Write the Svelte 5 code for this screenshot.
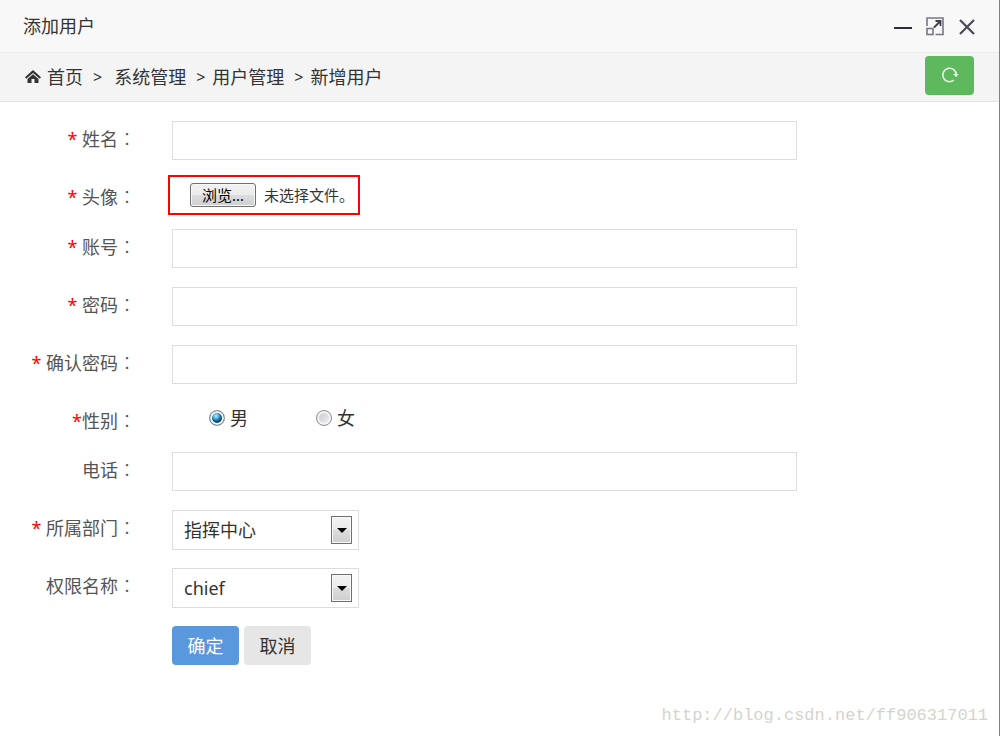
<script>
  const crumbs = ['系统管理', '用户管理', '新增用户'];
  const departments = ['指挥中心'];
  const roles = ['chief'];

  let name = '';
  let account = '';
  let password = '';
  let confirmPassword = '';
  let sex = 'male';
  let phone = '';
  let department = departments[0];
  let role = roles[0];
  let files;

  $: fileName = files && files.length ? files[0].name : '未选择文件。';

  function handleSubmit() {
    if (password !== confirmPassword) {
      alert('两次输入的密码不一致');
    }
  }
</script>

<div class="dialog">
  <header class="title-bar">
    <h1>添加用户</h1>
    <div class="window-tools">
      <button type="button" aria-label="最小化">
        <svg width="20" height="20" viewBox="0 0 20 20"><path d="M1 12h18" stroke="#2e2d3c" stroke-width="2" /></svg>
      </button>
      <button type="button" aria-label="最大化">
        <svg width="20" height="20" viewBox="0 0 20 20" fill="none" stroke="#777782" stroke-width="1.6">
          <path d="M2 10V2h16v16.500H10.500" />
          <rect x="2" y="12.500" width="6" height="6" />
          <path d="M9 11.500l6-6M10.500 5H15.500V10" stroke="#3e3d4b" stroke-width="1.8" />
        </svg>
      </button>
      <button type="button" aria-label="关闭">
        <svg width="20" height="20" viewBox="0 0 20 20"><path d="M3 4l14 14M17 4L3 18" stroke="#4a4956" stroke-width="2.2" /></svg>
      </button>
    </div>
  </header>

  <nav class="breadcrumb">
    <svg class="home" width="18" height="16" viewBox="0 0 18 16" fill="#333">
      <path d="M9 1L1 8.200l1.300 1.500L9 3.900l6.700 5.800L17 8.200z" />
      <path d="M9 5.200l-5.500 4.700V14h4v-4h3v4h4V9.900z" />
    </svg>
    <a class="first" href="#home">首页</a>
    {#each crumbs as crumb, i}
      <span class="sep" class:wide={i === 0}>&gt;</span>
      <a href="#crumb">{crumb}</a>
    {/each}
    <button class="refresh" type="button" aria-label="刷新">
      <svg width="18" height="18" viewBox="0 0 20 20" fill="none">
        <path d="M14.200 15.800A7.500 7.500 0 1 1 17 10" stroke="#e6f5e6" stroke-width="1.8" />
        <path d="M13.500 9h6L16.800 12.500z" fill="#e6f5e6" />
      </svg>
    </button>
  </nav>

  <form on:submit|preventDefault={handleSubmit}>
    <label class="caption" for="name"><i>*</i> 姓名<b>：</b></label>
    <input class="text" id="name" type="text" bind:value={name} />

    <label class="caption" for="avatar"><i>*</i> 头像<b>：</b></label>
    <div class="file-row">
      <div class="file-box">
        <input id="avatar" type="file" bind:files />
        <label class="browse" for="avatar">浏览...</label>
        <span>{fileName}</span>
      </div>
    </div>

    <label class="caption" for="account"><i>*</i> 账号<b>：</b></label>
    <input class="text" id="account" type="text" bind:value={account} />

    <label class="caption" for="password"><i>*</i> 密码<b>：</b></label>
    <input class="text" id="password" type="password" bind:value={password} />

    <label class="caption" for="confirm"><i>*</i> 确认密码<b>：</b></label>
    <input class="text" id="confirm" type="password" bind:value={confirmPassword} />

    <span class="caption" id="sex-label"><i>*</i>性别<b>：</b></span>
    <div class="radios" role="radiogroup" aria-labelledby="sex-label">
      <label><input type="radio" name="sex" value="male" bind:group={sex} />男</label>
      <label><input type="radio" name="sex" value="female" bind:group={sex} />女</label>
    </div>

    <label class="caption" for="phone">电话<b>：</b></label>
    <input class="text" id="phone" type="text" bind:value={phone} />

    <label class="caption" for="department"><i>*</i> 所属部门<b>：</b></label>
    <div class="select-box">
      <select id="department" bind:value={department}>
        {#each departments as item}
          <option value={item}>{item}</option>
        {/each}
      </select>
      <span class="arrow"></span>
    </div>

    <label class="caption" for="role">权限名称<b>：</b></label>
    <div class="select-box">
      <select id="role" bind:value={role}>
        {#each roles as item}
          <option value={item}>{item}</option>
        {/each}
      </select>
      <span class="arrow"></span>
    </div>

    <div class="actions">
      <button class="ok" type="submit">确定</button>
      <button class="cancel" type="button">取消</button>
    </div>
  </form>

  <footer>http://blog.csdn.net/ff906317011</footer>
</div>

<style>
  :global(body) {
    background: #fff;
  }
  .dialog {
    box-sizing: border-box;
    min-height: 100vh;
    display: flex;
    flex-direction: column;
    border-right: 1px solid #808080;
    font-family: 'Noto Sans', 'Noto Sans CJK SC', sans-serif;
    font-size: 18px;
    line-height: 24px;
    color: #333;
  }
  button, input, select {
    box-sizing: border-box;
    margin: 0;
    font: inherit;
    color: inherit;
  }
  button {
    padding: 0;
    border: none;
    cursor: pointer;
  }
  .title-bar {
    display: flex;
    align-items: center;
    justify-content: space-between;
    height: 52px;
    padding: 0 22px 0 23px;
    background: #f8f8f8;
    border-bottom: 1px solid #eee;
  }
  h1 {
    margin: 0;
    font: inherit;
  }
  .window-tools {
    display: flex;
    gap: 12px;
  }
  .window-tools button {
    width: 20px;
    height: 20px;
    background: none;
  }
  svg {
    display: block;
  }
  .breadcrumb {
    display: flex;
    align-items: center;
    height: 48px;
    padding: 0 25px 0 24px;
    background: #f4f4f4;
    border-bottom: 1px solid #e4e4e4;
  }
  .breadcrumb a {
    color: inherit;
    text-decoration: none;
  }
  .breadcrumb .first {
    margin-left: 5px;
  }
  .sep {
    margin: 0 7px 0 10px;
    font-size: 16px;
  }
  .sep.wide {
    margin-right: 12px;
  }
  .refresh {
    display: flex;
    align-items: center;
    justify-content: center;
    width: 49px;
    height: 39px;
    margin: 0 0 4px auto;
    border-radius: 4px;
    background: #5eb95e;
  }
  form {
    display: grid;
    grid-template-columns: 136px 1fr;
    column-gap: 36px;
    row-gap: 19px;
    padding: 19px 202px 0 0;
  }
  .caption {
    padding-top: 5px;
    height: 24px;
    color: #555;
    text-align: right;
    white-space: nowrap;
  }
  .caption i {
    color: #f00;
    font-style: normal;
  }
  /* the TC face centres the full-width colon in its box */
  .caption b {
    font-family: 'Noto Sans CJK TC', sans-serif;
    font-weight: 300;
  }
  .text {
    width: 100%;
    height: 39px;
    padding: 0 10px;
    border: 1px solid #ddd;
    background: #fff;
  }
  .file-row {
    display: flex;
    height: 31px;
    margin-left: -4px;
    align-items: center;
  }
  .file-box {
    position: relative;
    box-sizing: border-box;
    flex: none;
    display: flex;
    align-items: center;
    gap: 8px;
    height: 40px;
    padding: 0 4px 0 20px;
    border: 2px solid #f00;
    font-size: 15px;
  }
  .file-box input {
    position: absolute;
    width: 1px;
    height: 1px;
    opacity: 0;
  }
  .browse {
    box-sizing: border-box;
    width: 66px;
    height: 24px;
    border: 1px solid #707070;
    border-radius: 3px;
    background: linear-gradient(#f2f2f2, #ebebeb 50%, #ddd 50%, #cfcfcf);
    box-shadow: inset 0 0 0 1px #f8f8f8;
    color: #000;
    line-height: 22px;
    text-align: center;
  }
  .radios {
    display: flex;
    align-items: center;
    gap: 68px;
    height: 30px;
    padding-left: 37px;
  }
  .radios label {
    display: flex;
    align-items: center;
    gap: 5px;
  }
  .radios input {
    appearance: none;
    width: 16px;
    height: 16px;
    border: 1px solid #8e8f8f;
    border-radius: 50%;
    background: linear-gradient(135deg, #c4c6cb, #f4f4f4);
    box-shadow: inset 0 0 0 2px #f4f4f4;
  }
  .radios input:checked {
    background: radial-gradient(circle at 6px 5px, #c8f0ff 0, #39a5d6 3px, #0a4269 6px);
  }
  .select-box {
    position: relative;
    width: 187px;
    height: 39px;
  }
  select {
    appearance: none;
    width: 100%;
    height: 40px;
    padding: 0 30px 0 11px;
    border: 1px solid #ddd;
    border-radius: 0;
    background: #fff;
  }
  .arrow {
    position: absolute;
    top: 6px;
    right: 7px;
    box-sizing: border-box;
    width: 21px;
    height: 28px;
    border: 1px solid #707070;
    background: linear-gradient(#f2f2f2, #ebebeb 50%, #ddd 50%, #cfcfcf);
    box-shadow: inset 0 0 0 1px #f8f8f8;
    pointer-events: none;
  }
  .arrow::after {
    content: '';
    display: block;
    width: 0;
    margin: 11px auto 0;
    border: 5px solid transparent;
    border-top-color: #000;
    border-bottom: none;
  }
  .actions {
    grid-column: 2;
    display: flex;
    gap: 5px;
  }
  .actions button {
    width: 67px;
    height: 39px;
    border-radius: 4px;
  }
  .actions .ok {
    background: #5a98de;
    color: #fff;
  }
  .actions .cancel {
    background: #e6e6e6;
  }
  footer {
    margin-top: auto;
    padding: 0 11px 8px;
    color: #d4d4ce;
    font-family: 'Liberation Mono', monospace;
    font-size: 17px;
    text-align: right;
  }
</style>
